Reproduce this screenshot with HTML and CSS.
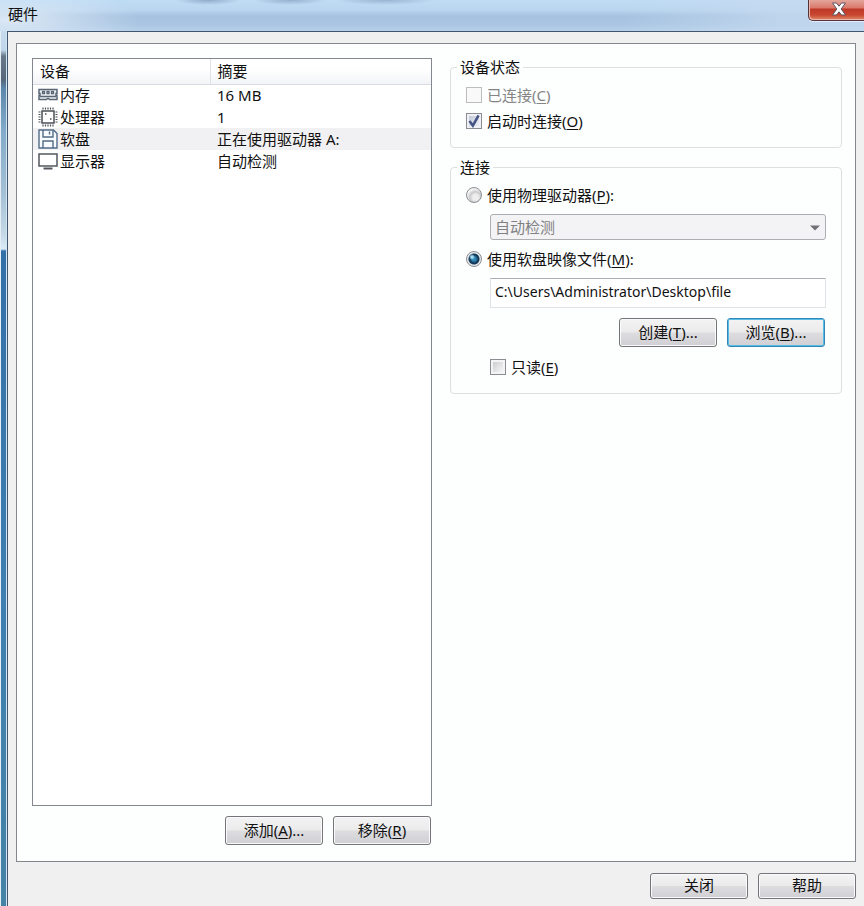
FILE: index.html
```html
<!DOCTYPE html>
<html lang="zh-CN">
<head>
<meta charset="utf-8">
<title>硬件</title>
<link rel="stylesheet" href="styles.css">
</head>
<body>
<div class="window">
  <header class="titlebar">
    <h1 class="title">硬件</h1>
    <button class="close" type="button" aria-label="关闭窗口">
      <svg width="16" height="14" viewBox="0 0 16 14"><path d="M1.500 1h4L8 4.200 10.500 1h4L10.200 7l4.300 6h-4L8 9.800 5.500 13h-4L5.800 7z" fill="#fff" stroke="#5b5465" stroke-width="1"/></svg>
    </button>
  </header>
  <div class="client">
    <main class="panel">
      <section class="devices">
        <div class="list">
          <table class="table">
            <thead><tr><th class="name-col">设备</th><th>摘要</th></tr></thead>
            <tbody>
              <tr>
                <td><span class="device"><svg class="icon" width="20" height="20" viewBox="0 0 20 20" fill="none" stroke="#596575"><path d="M1 4.500h18v4h-1v2h1v4H11.500l-1-1h-1l-1 1H1v-4h1v-2H1z" fill="#eef1f5" stroke-width="1.500"/><path d="M4.500 6.500h2v2h-2zM9 6.500h2v2H9zM13.500 6.500h2v2h-2z" stroke-width="1.300"/><path d="M2 11.500h16" stroke-width="1.500"/></svg>内存</span></td>
                <td>16 MB</td>
              </tr>
              <tr>
                <td><span class="device"><svg class="icon" width="20" height="20" viewBox="0 0 20 20" fill="none" stroke="#4b4f55"><path d="M4 4h12v12H4z" fill="#fff" stroke-width="1.500"/><path d="M5 .500v2m2.500-2v2m2.500-2v2m2.500-2v2m2.500-2v2M5 17.500v2m2.500-2v2m2.500-2v2m2.500-2v2m2.500-2v2M.500 5h2m-2 2.500h2m-2 2.500h2m-2 2.500h2m-2 2.500h2M17.500 5h2m-2 2.500h2m-2 2.500h2m-2 2.500h2m-2 2.500h2" stroke-width="1.200"/><path d="M7 7h1.500M12 12h1.500" stroke-width="1.500"/></svg>处理器</span></td>
                <td>1</td>
              </tr>
              <tr class="selected">
                <td><span class="device"><svg class="icon" width="20" height="20" viewBox="0 0 20 20" fill="none" stroke="#536b87" stroke-width="1.400"><path d="M1 1h14.500L19 4.500V19H1z" fill="#f8fbff"/><path d="M5 1v7h10V1M11.500 2.500v3M5 19v-7h10v7"/></svg>软盘</span></td>
                <td>正在使用驱动器 A:</td>
              </tr>
              <tr>
                <td><span class="device"><svg class="icon" width="20" height="20" viewBox="0 0 20 20" fill="none" stroke="#53575d"><path d="M1 3h18v12H1z" fill="#fff" stroke-width="1.500"/><path d="M5.500 17.500h9" stroke-width="2"/></svg>显示器</span></td>
                <td>自动检测</td>
              </tr>
            </tbody>
          </table>
        </div>
        <div class="actions">
          <button class="btn" type="button">添加(<u>A</u>)...</button>
          <button class="btn" type="button">移除(<u>R</u>)</button>
        </div>
      </section>
      <form class="settings">
        <fieldset class="group">
          <legend>设备状态</legend>
          <label class="option disabled"><input class="check" type="checkbox" disabled><span>已连接(<u>C</u>)</span></label>
          <label class="option second"><input class="check" type="checkbox" checked><span>启动时连接(<u>O</u>)</span></label>
        </fieldset>
        <fieldset class="group connection">
          <legend>连接</legend>
          <label class="option"><input class="radio" type="radio" name="source"><span>使用物理驱动器(<u>P</u>):</span></label>
          <div class="select-wrap">
            <select class="select" aria-label="物理驱动器" disabled><option>自动检测</option></select>
            <svg class="arrow" width="10" height="6" viewBox="0 0 10 6"><path d="M0 .500h10L5 5.500z" fill="#707078"/></svg>
          </div>
          <label class="option"><input class="radio" type="radio" name="source" checked><span>使用软盘映像文件(<u>M</u>):</span></label>
          <input class="path" type="text" aria-label="软盘映像文件" value="C:\Users\Administrator\Desktop\file">
          <div class="actions file-actions">
            <button class="btn" type="button">创建(<u>T</u>)...</button>
            <button class="btn default" type="button">浏览(<u>B</u>)...</button>
          </div>
          <label class="option indent"><input class="check" type="checkbox"><span>只读(<u>E</u>)</span></label>
        </fieldset>
      </form>
    </main>
    <footer class="footer">
      <button class="btn short" type="button">关闭</button>
      <button class="btn short" type="button">帮助</button>
    </footer>
  </div>
</div>
</body>
</html>
```

FILE: styles.css
```css
* { box-sizing: border-box; }

body {
  margin: 0;
  color: #111;
  font: 15px/20px "Noto Sans", "Noto Sans CJK SC", sans-serif;
}

button, input, select { font: inherit; color: inherit; }
u { text-underline-offset: 2px; text-decoration-thickness: 1px; }

.window {
  display: flex;
  flex-direction: column;
  min-height: 100vh;
  padding-left: 7px;
  background:
    linear-gradient(#0000 0 31px, #f0f0f0 31px) 7px 0 / 100% 100% no-repeat,
    linear-gradient(90deg, #e4edf5 0 1px, #0000 1px 6px, #cfe6f5 6px 7px, #0000 7px),
    linear-gradient(#cfe2f3 0, #c0d6ea 50px, #68798a 56px, #56687a 80px, #5c86aa 88px, #82aac9 130px, #a2bfd4 190px, #c5d9e6 235px, #dcebf8 249px, #3470a8 251px, #3f7fb1 600px, #4584a5 100%);
}

.titlebar {
  display: flex;
  justify-content: space-between;
  align-items: flex-start;
  height: 31px;
  margin-left: -7px;
  padding-left: 8px;
  background:
    radial-gradient(ellipse 130px 34px at 10px 20px, #dce9f6, #dce9f600),
    radial-gradient(ellipse 32px 5px at 208px 0, #7894b4b0, #7894b400),
    radial-gradient(ellipse 36px 5px at 290px 0, #7894b4a0, #7894b400),
    radial-gradient(ellipse 50px 5px at 385px 0, #7894b490, #7894b400),
    linear-gradient(90deg, #c6daf000 620px, #c6daf0c0 780px),
    linear-gradient(#bfdcf5, #b9d5ef 10px, #a5c2e0 16px, #a9c5e2 24px, #b6d0ea);
}

.title { margin: 4px 0 0; font-size: 15px; font-weight: 400; }

.close {
  display: flex;
  justify-content: center;
  align-items: center;
  width: 56px;
  height: 21px;
  padding: 0 0 3px 5px;
  border: 1px solid #54313b;
  border-width: 0 0 1px 1px;
  border-radius: 0 0 0 5px;
  background: linear-gradient(#e4a59b, #d9786a 8px, #bd3826 9px, #c94832 15px, #df8a67);
  box-shadow: inset 1px -1px #eab8aa, 0 1px #e3eefa;
}

.client {
  display: flex;
  flex: 1;
  flex-direction: column;
  padding: 11px 8px 7px;
  border: solid #43566d;
  border-width: 1px 0 0 1px;
  background: #f0f0f0;
}

.panel {
  display: flex;
  flex: 1;
  gap: 18px;
  padding: 14px 13px 16px 15px;
  border: 1px solid #828790;
  background: #fdfefe;
}

.devices { display: flex; flex: 400; flex-direction: column; gap: 10px; }
.settings { flex: 392; }

.list { flex: 1; border: 1px solid #828790; background: #fff; }
.table { width: 100%; border-collapse: collapse; table-layout: fixed; }
.table th {
  height: 25px;
  padding: 0 7px;
  border-bottom: 1px solid #d8dbe0;
  background: linear-gradient(#fff 40%, #f3f4f7);
  font-weight: 400;
  text-align: left;
}
.table .name-col { width: 177px; border-right: 1px solid #dfe2e7; }
.table td { height: 22px; padding: 0 7px; }
.selected { background: #f1f0f2; }
.device { display: flex; align-items: center; gap: 2px; }
.table td:first-child { padding-left: 5px; }
.icon { flex: none; }

.actions { display: flex; justify-content: flex-end; gap: 10px; padding-right: 1px; }
.file-actions { padding-top: 1px; }
.btn {
  width: 98px;
  height: 29px;
  padding: 0 0 2px;
  border: 1px solid #74747a;
  border-radius: 3px;
  background: linear-gradient(#f3f3f3, #ebebec 48%, #dddde0 52%, #d0cfd3);
  box-shadow: inset 0 0 0 1px #fafafa;
}
.default { border-color: #3387b5; box-shadow: inset 0 0 0 1px #56bde9; }
.short { height: 26px; }

.group {
  display: flex;
  flex-direction: column;
  min-width: 0;
  margin: -1px 0 9px;
  padding: 8px 15px 16px;
  border: 1px solid #dcdfe2;
  border-radius: 4px;
}
.connection { gap: 9px; margin-top: 0; }
legend { height: 20px; margin-left: -9px; padding: 0 3px; }

.option { display: flex; align-items: center; gap: 5px; height: 20px; }
.second { margin-top: 6px; }
.disabled { color: #858585; }
.indent { margin: 1px 0 0 24px; }

.check, .radio {
  appearance: none;
  flex: none;
  width: 16px;
  height: 16px;
  margin: 0;
  border: 1px solid #8c8d92;
  background: linear-gradient(135deg, #cdced2, #f6f6f6) content-box, #f4f4f4;
  padding: 2px;
}
.check:disabled { border-color: #bdbdbf; background: #f9f9f9; }
.check:checked {
  background:
    url("data:image/svg+xml,%3Csvg xmlns='http://www.w3.org/2000/svg' viewBox='0 0 14 14'%3E%3Cpath d='M3 7l3 4 5-9' fill='none' stroke='%23465585' stroke-width='2.2'/%3E%3C/svg%3E") border-box,
    linear-gradient(135deg, #c4c9d8, #eef0f8) content-box, #f0f1f6;
}
.radio { border-radius: 50%; background: radial-gradient(circle at 60% 65%, #eee 20%, #cacacd 40%, #f4f4f4 60%) border-box; }
.radio:checked {
  background:
    radial-gradient(circle at 6px 6px, #a6ddf3 0 1px, #a6ddf300 3px) border-box,
    radial-gradient(circle, #2f86b4 0 2px, #143858 4px, #143858 5px, #e4e8ec 6px, #f5f5f5) border-box;
}

.select-wrap { position: relative; margin-left: 24px; }
.select {
  appearance: none;
  display: block;
  width: 100%;
  height: 26px;
  padding: 0 24px 0 4px;
  border: 1px solid #adadb2;
  border-radius: 3px;
  background: #f3f2f4;
  color: #818183;
  opacity: 1;
}
.arrow { position: absolute; top: 11px; right: 6px; }
.path {
  height: 30px;
  min-width: 0;
  margin-left: 24px;
  padding: 0 4px 4px;
  border: 1px solid #dfe2e7;
  border-top-color: #abadb3;
  background: #fff;
  font-size: 14px;
}

.footer { display: flex; justify-content: flex-end; gap: 10px; padding-top: 11px; }
```
